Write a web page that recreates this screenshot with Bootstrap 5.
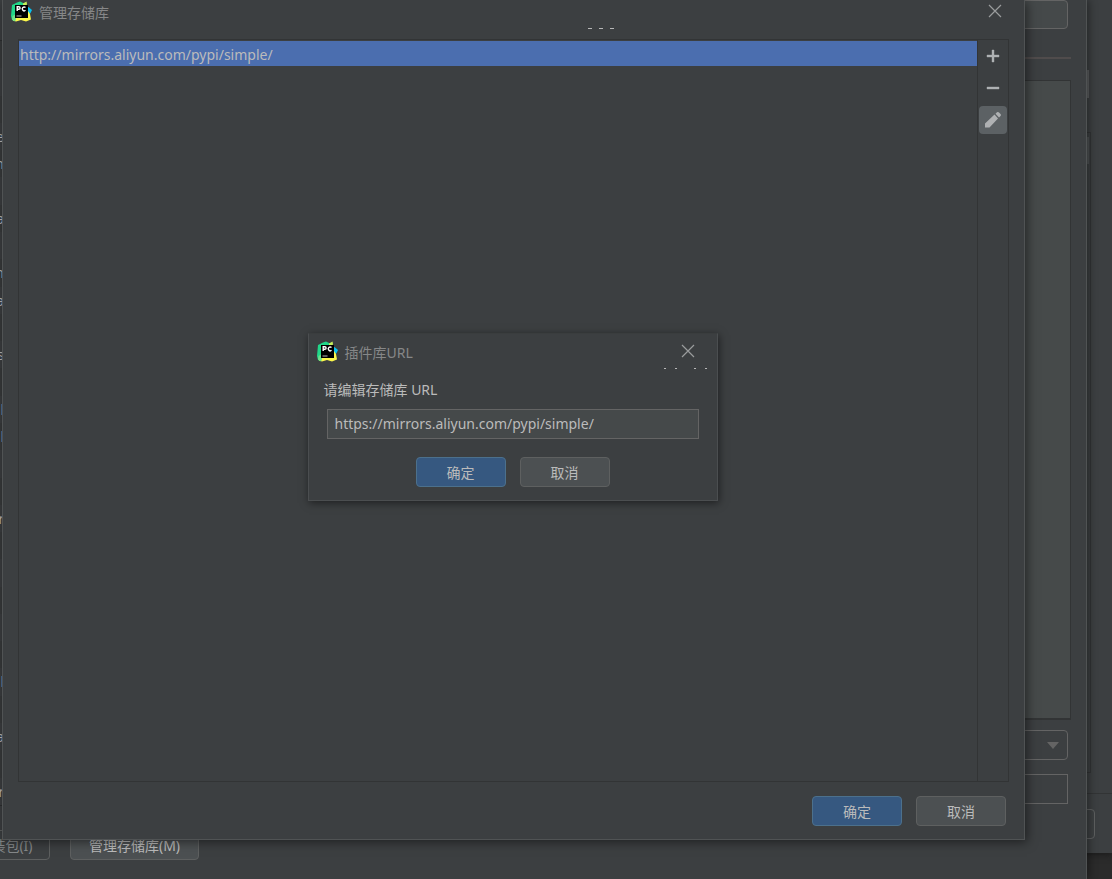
<!DOCTYPE html>
<html lang="zh-CN">
<head>
<meta charset="utf-8">
<meta name="viewport" content="width=device-width, initial-scale=1">
<title>管理存储库</title>
<link href="https://cdn.jsdelivr.net/npm/bootstrap@5.3.0/dist/css/bootstrap.min.css" rel="stylesheet">
<style>
  :root { --face: #3c3f41; --line: #323435; --edge: #505354; --ink: #bbbbbb; }
  body { background: #2b2b2b; color: var(--ink); font: 14px/20px "Noto Sans", "Noto Sans CJK SC", sans-serif; }
  .desk { height: 100vh; min-height: 600px; }
  .win { position: absolute; background: var(--face); }
  .win-settings { inset: 0 0 26px 0; box-shadow: 0 2px 6px #1c1c1c; }
  .win-packages { inset: 0 25px 0 0; border-right: 1px solid var(--edge); box-shadow: 2px 0 8px rgba(0,0,0,.4); }
  .win-repos { inset: 0 87px 39px 2px; border: 1px solid var(--edge); border-top: 0; box-shadow: 2px 2px 10px rgba(0,0,0,.5); }
  .win-repos > header { height: 39px; padding: 1px 22px 0 8px; }
  .win-repos > footer { gap: 14px; padding: 14px 18px 13px; }
  .ask-layer { position: absolute; inset: 0; padding: 0 2px 5px 0; }
  .ask { width: 410px; height: 168px; position: relative; background: var(--face); border: 1px solid #4b4e50; border-top-color: #3a3d3e; box-shadow: 1px 2px 8px rgba(0,0,0,.5); }
  .ask > header { height: 46px; padding: 7px 22px 0 8px; }
  .cap { color: #868788; padding-top: 2px; margin-left: 7px; }
  .btn-ide { --bs-btn-font-size: 14px; --bs-btn-line-height: 20px; --bs-btn-padding-y: 4px; --bs-btn-padding-x: 16px; --bs-btn-border-radius: 4px;
    --bs-btn-color: #bbbbbb; --bs-btn-bg: #4c5052; --bs-btn-border-color: #5e6060; --bs-btn-hover-color: #ddd; --bs-btn-hover-bg: #55595b; --bs-btn-hover-border-color: #6e7070;
    --bs-btn-disabled-color: #85888a; --bs-btn-disabled-bg: #3c3f41; --bs-btn-disabled-border-color: #5e6060; --bs-btn-disabled-opacity: 1;
    height: 30px; min-width: 90px; white-space: nowrap; padding-top: 5px; padding-bottom: 3px; }
  .btn-main { --bs-btn-bg: #365880; --bs-btn-border-color: #4c708c; --bs-btn-hover-bg: #3f6694; --bs-btn-hover-border-color: #5a80a0; }
  .btn-close-ide { border: 0; background: none; padding: 0; margin-top: 3px; width: 14px; height: 14px; color: #9a9c9d; display: block; }
  .btn-close-ide svg, .tool svg { display: block; }
  .tool { width: 28px; height: 28px; padding: 6px; border: 0; border-radius: 4px; background: none; color: #afb1b3; }
  .tool.on { background: #5c6164; }
  .frame { border: 1px solid var(--line); margin: 0 15px; }
  .tools { padding: 2px 1px; }
  .repos { border-right: 1px solid var(--line); padding-top: 1px; }
  .repos a { display: block; height: 25px; padding: 4px 1px 1px; color: var(--ink); text-decoration: none; background: #4b6eaf; }
  .field { height: 30px; border: 1px solid #646464; border-radius: 0; background: #45494a; color: var(--ink); padding: 0 7px; font: inherit; }
  .field:focus { outline: 0; }
  .ask .field { padding-bottom: 2px; }
  .speck { position: absolute; height: 1px; left: 585px; top: 28px; gap: 7px; }
  .speck i { width: 4px; height: 1px; background: #b8b8b8; }
  .ask .speck { left: auto; right: 10px; top: 34px; gap: 9px; }
  .ask .speck i { width: 2px; }
  /* packages window */
  .pkgs { width: 24px; margin-left: -20px; padding-top: 40px; }
  .pkgs ul { border: solid #2d2f30; border-width: 1px 0; }
  .pkgs li { flex: 1 1 0; min-height: 0; line-height: 28px; text-align: right; }
  .pkgs li:nth-child(odd) { background: #393b3c; }
  .info { padding-right: 15px; margin-left: 680px; min-width: 0; }
  .info .field { margin-right: 3px; }
  .info .finder { height: 29px; border-radius: 4px; }
  .rule-line { height: 2px; background: #504c4c; margin: 28px 0 21px; }
  .about { background: #464a4a; border: 1px solid var(--line); border-bottom-width: 2px; margin-bottom: 10px; }
  .info .pick { appearance: none; border-radius: 4px; background: var(--face) url("data:image/svg+xml,%3Csvg xmlns='http://www.w3.org/2000/svg' viewBox='0 0 12 7'%3E%3Cpath d='M0 0h12L6 7z' fill='%23646464'/%3E%3C/svg%3E") no-repeat right 8px center / 12px 7px; }
  .info .opts { margin-top: 14px; margin-bottom: 2px; background: var(--face); }
  .pkg-foot { height: 73px; padding: 24px 0 19px; gap: 20px; }
  .pkg-foot .btn-ide:first-child { margin-left: -40px; }
  .pkg-foot .btn-ide:last-child { min-width: 129px; }
  /* strip of the settings window */
  .strip { width: 25px; padding-top: 70px; }
  .strip .knob { width: 2px; height: 28px; background: #5a5d5e; }
  .strip .pane { margin-top: 34px; width: 4px; border: 1px solid var(--line); border-left: 0; }
  .strip .thumb { width: 2px; height: 27px; margin-top: 4px; background: #4d5152; }
  .strip-foot { border-top: 1px solid var(--line); margin-top: 20px; padding: 15px 0 14px; }
  .strip-foot button { width: 90px; margin-left: -82px; background: var(--face); }
</style>
</head>
<body>
<svg width="0" height="0" class="position-absolute" aria-hidden="true">
  <symbol id="logo" viewBox="0 0 21 21">
    <path d="M1 4 6 1.500 9 .5l4 2L12 8 5 17l-2 3-2-1-1-4z" fill="#21d789"/>
    <path d="M12 2.500 15.500 .5 16 3l-1 3h-3z" fill="#c5f05a"/>
    <path d="M15.500 5 18 6.500 21 9l-1.500 3-2 2-2-4z" fill="#07c3f2"/>
    <path d="M17 10l2 3 1 5.500-5 2-5-1.500-5 1.500-3-1 3-5z" fill="#fcf84a"/>
    <path d="M1.500 15 5 13v5l-1 2.500-3-2z" fill="#6fe08a"/>
    <path d="M4 4h13v13H4z" fill="#000"/>
    <path d="M6.200 10V5.700h1.600a1.300 1.300 0 0 1 0 2.600H6.200M14.500 6.500a1.900 1.900 0 1 0 0 2.800" fill="none" stroke="#fff" stroke-width="1.400"/>
    <path d="M5.500 14.500h5v1h-5z" fill="#bbb"/>
  </symbol>
  <symbol id="cross" viewBox="0 0 14 14"><path d="m1 1 12 12M13 1 1 13" stroke="currentColor" stroke-width="1.200" fill="none"/></symbol>
</svg>

<main class="desk position-relative overflow-hidden">
  <section class="win win-settings d-flex justify-content-end" aria-label="设置">
    <div class="strip d-flex flex-column">
      <div class="knob"></div>
      <div class="pane flex-grow-1"><div class="thumb"></div></div>
      <div class="strip-foot"><button type="button" class="btn btn-ide" aria-label="应用"></button></div>
    </div>
  </section>

  <section class="win win-packages d-flex flex-column overflow-hidden" aria-label="可用软件包">
    <div class="d-flex flex-grow-1">
      <div class="pkgs d-flex">
        <ul class="list-unstyled d-flex flex-column flex-grow-1 mb-0">
          <li></li><li></li><li></li><li>e</li><li>n</li><li></li><li>a</li>
          <li></li><li>n</li><li>a</li><li></li><li>s</li><li></li><li>l</li>
          <li>l</li><li></li><li></li><li>r</li><li></li><li></li><li></li>
          <li></li><li></li><li>l</li><li></li><li>a</li><li></li><li>r</li>
        </ul>
      </div>
      <div class="info d-flex flex-column flex-grow-1">
        <input class="field finder" aria-label="搜索">
        <div class="rule-line"></div>
        <div class="about flex-grow-1"></div>
        <select class="field pick" aria-label="版本"><option></option></select>
        <input class="field opts" aria-label="选项">
      </div>
    </div>
    <div class="pkg-foot d-flex">
      <button type="button" class="btn btn-ide" disabled>安装包(I)</button>
      <button type="button" class="btn btn-ide">管理存储库(M)</button>
    </div>
  </section>

  <section class="win win-repos d-flex flex-column" aria-label="管理存储库">
    <header class="d-flex align-items-start">
      <svg width="21" height="21" aria-hidden="true"><use href="#logo"/></svg>
      <span class="cap flex-grow-1">管理存储库</span>
      <button type="button" class="btn-close-ide" aria-label="关闭"><svg width="14" height="14"><use href="#cross"/></svg></button>
    </header>
    <div class="speck d-flex"><i></i><i></i><i></i></div>
    <div class="frame d-flex flex-grow-1">
      <div class="repos flex-grow-1"><a href="#">http://mirrors.aliyun.com/pypi/simple/</a></div>
      <div class="tools d-flex flex-column gap-1">
        <button type="button" class="tool" aria-label="添加"><svg width="16" height="16"><path d="M7 2h2v5h5v2H9v5H7V9H2V7h5z" fill="currentColor" stroke="currentColor" stroke-width=".4"/></svg></button>
        <button type="button" class="tool" aria-label="移除"><svg width="16" height="16"><path d="M2 7h12v2H2z" fill="currentColor" stroke="currentColor" stroke-width=".4"/></svg></button>
        <button type="button" class="tool on" aria-label="编辑"><svg width="16" height="16"><path d="M9.500 2.500 13 6.500 4.500 15.500H0V11.500zM10.500 1.700 12 .3Q13-.4 14 .5L15.500 2Q16.400 3 15.500 4L14 5.500z" fill="currentColor"/></svg></button>
      </div>
    </div>
    <footer class="d-flex justify-content-end">
      <button type="button" class="btn btn-ide btn-main">确定</button>
      <button type="button" class="btn btn-ide">取消</button>
    </footer>

    <div class="ask-layer d-flex align-items-center justify-content-center">
      <form class="ask" role="dialog" aria-label="插件库URL">
        <header class="d-flex align-items-start">
          <svg width="21" height="21" aria-hidden="true"><use href="#logo"/></svg>
          <span class="cap flex-grow-1">插件库URL</span>
          <button type="button" class="btn-close-ide" aria-label="关闭"><svg width="14" height="14"><use href="#cross"/></svg></button>
        </header>
        <div class="speck d-flex"><i></i><i></i><i class="ms-2"></i><i></i></div>
        <label for="url" class="d-block" style="padding-left:15px">请编辑存储库 URL</label>
        <div style="padding:9px 18px 0"><input id="url" class="field w-100" value="https://mirrors.aliyun.com/pypi/simple/"></div>
        <div class="d-flex justify-content-center" style="gap:14px;padding-top:18px">
          <button type="button" class="btn btn-ide btn-main">确定</button>
          <button type="button" class="btn btn-ide">取消</button>
        </div>
      </form>
    </div>
  </section>
</main>
<script src="https://cdn.jsdelivr.net/npm/bootstrap@5.3.0/dist/js/bootstrap.bundle.min.js"></script>
</body>
</html>
